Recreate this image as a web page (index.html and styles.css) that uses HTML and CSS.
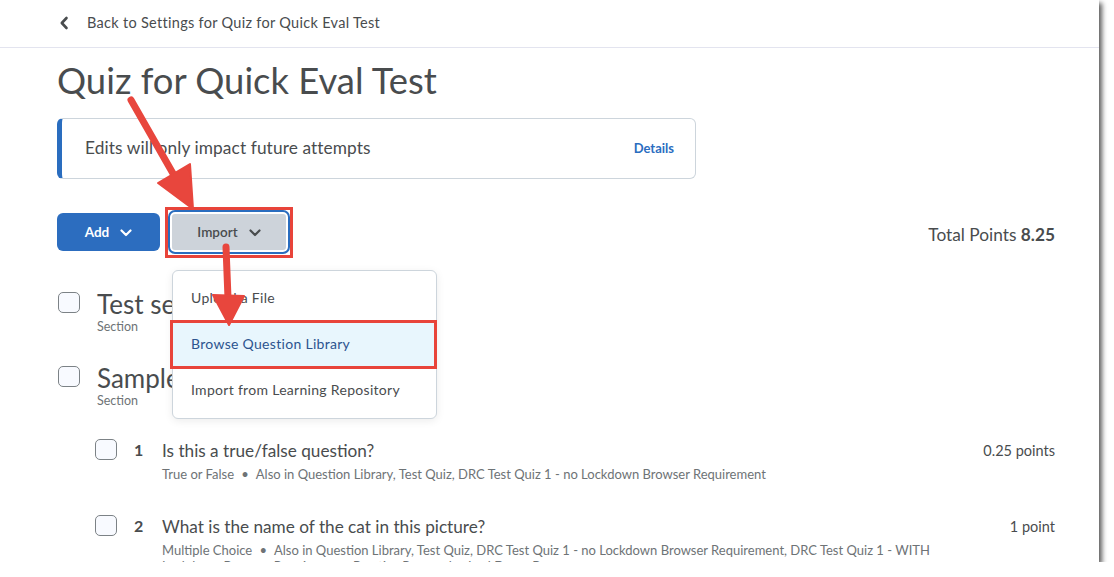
FILE: index.html
```html
<!DOCTYPE html>
<html lang="en">
<head>
<meta charset="utf-8">
<title>Quiz for Quick Eval Test</title>
<link rel="stylesheet" href="styles.css">
</head>
<body>
<div class="frame">
  <nav class="topnav">
    <svg class="back-icon" width="10" height="14" viewBox="0 0 10 14"><path d="M7.5 2 L2.8 7 L7.5 12" fill="none" stroke="#494c4e" stroke-width="2.6" stroke-linecap="round" stroke-linejoin="round"/></svg>
    <span class="back-text">Back to Settings for Quiz for Quick Eval Test</span>
  </nav>
  <main class="main">
    <h1 class="title">Quiz for Quick Eval Test</h1>
    <div class="alert">
      <span class="alert-text">Edits will only impact future attempts</span>
      <span class="alert-link">Details</span>
    </div>
    <div class="toolbar">
      <div class="buttons">
        <button class="btn btn-primary">Add <svg width="12" height="8" viewBox="0 0 12 8"><path d="M1.5 1.5 L6 6 L10.5 1.5" fill="none" stroke="#fff" stroke-width="2.2" stroke-linecap="round" stroke-linejoin="round"/></svg></button>
        <button class="btn btn-secondary">Import <svg width="12" height="8" viewBox="0 0 12 8"><path d="M1.5 1.5 L6 6 L10.5 1.5" fill="none" stroke="#494c4e" stroke-width="2.2" stroke-linecap="round" stroke-linejoin="round"/></svg></button>
      </div>
      <div class="total">Total Points <b>8.25</b></div>
    </div>
    <div class="sections">
      <div class="section-row">
        <span class="checkbox"></span>
        <div class="section-text">
          <div class="section-title">Test section</div>
          <div class="section-sub">Section</div>
        </div>
      </div>
      <div class="section-row second">
        <span class="checkbox"></span>
        <div class="section-text">
          <div class="section-title">Sample section</div>
          <div class="section-sub">Section</div>
        </div>
      </div>
    </div>
    <div class="questions">
      <div class="question">
        <span class="checkbox small"></span>
        <span class="q-num">1</span>
        <div class="q-body">
          <div class="q-head"><span class="q-title">Is this a true/false question?</span><span class="q-points">0.25 points</span></div>
          <div class="q-sub">True or False <span class="dot">•</span> Also in Question Library, Test Quiz, DRC Test Quiz 1 - no Lockdown Browser Requirement</div>
        </div>
      </div>
      <div class="question">
        <span class="checkbox small"></span>
        <span class="q-num">2</span>
        <div class="q-body">
          <div class="q-head"><span class="q-title">What is the name of the cat in this picture?</span><span class="q-points">1 point</span></div>
          <div class="q-sub">Multiple Choice <span class="dot">•</span> Also in Question Library, Test Quiz, DRC Test Quiz 1 - no Lockdown Browser Requirement, DRC Test Quiz 1 - WITH Lockdown Browser Requirement, Practice Respondus LockDown Browser</div>
        </div>
      </div>
    </div>
  </main>

  <div class="menu">
    <div class="menu-item">Upload a File</div>
    <div class="menu-item active">Browse Question Library</div>
    <div class="menu-item">Import from Learning Repository</div>
  </div>

  <div class="hl hl-import"></div>
  <div class="hl hl-browse"></div>

  <svg class="arrows" width="1099" height="562" viewBox="0 0 1099 562">
    <line x1="131" y1="100" x2="175" y2="177" stroke="#e8463d" stroke-width="7" stroke-linecap="round"/>
    <polygon points="193,209 158,183 190,164" fill="#e8463d" stroke="#e8463d" stroke-width="2" stroke-linejoin="round"/>
    <line x1="226" y1="247" x2="228" y2="298" stroke="#e8463d" stroke-width="7" stroke-linecap="round"/>
    <polygon points="229,325 213,295 244,296" fill="#e8463d" stroke="#e8463d" stroke-width="2" stroke-linejoin="round"/>
  </svg>
</div>
</body>
</html>
```
FILE: styles.css
```css
* { box-sizing: border-box; }
html, body { margin: 0; padding: 0; background: #fff; }
body { font-family: Lato, "Open Sans", "Liberation Sans", sans-serif; color: #494c4e; }

.frame {
  position: relative;
  width: 1099px;
  height: 562px;
  background: #fff;
  overflow: hidden;
  box-shadow: 3px 3px 5px rgba(0,0,0,0.65);
}

.topnav {
  height: 48px;
  border-bottom: 1px solid #e3e4ef;
  display: flex;
  align-items: center;
  padding-left: 59px;
  padding-bottom: 2px;
}
.back-icon { display: block; }
.back-text {
  margin-left: 18px;
  font-size: 14.5px;
  letter-spacing: 0.3px;
  color: #494c4e;
}

.main { padding: 0 44px 0 57px; }

.title {
  margin: 12px 0 0 0;
  font-size: 36.4px;
  font-weight: 400;
  line-height: 40px;
  color: #494c4e;
}

.alert {
  margin-top: 18px;
  width: 639px;
  height: 61px;
  border: 1px solid #cdd5dc;
  border-left: 5px solid #2a6dbf;
  border-radius: 6px;
  display: flex;
  align-items: center;
  justify-content: space-between;
  padding: 0 21px 3px 23px;
}
.alert-text { font-size: 17.3px; color: #494c4e; letter-spacing: 0.1px; }
.alert-link { font-size: 13px; font-weight: 700; color: #2a6dbf; margin-top: 2px; }

.toolbar {
  margin-top: 30px;
  height: 46px;
  display: flex;
  align-items: center;
  justify-content: space-between;
}
.buttons { display: flex; align-items: center; }
.btn {
  font-family: inherit;
  font-size: 13.5px;
  font-weight: 700;
  border-radius: 6px;
  display: flex;
  align-items: center;
  justify-content: center;
  gap: 11px;
  cursor: pointer;
}
.btn svg { display: block; margin-top: 2px; }
.btn-primary {
  width: 103px;
  height: 38px;
  background: #2c6dbf;
  color: #fff;
  border: none;
  padding: 0;
}
.btn-secondary {
  margin-left: 8px;
  width: 122px;
  height: 44px;
  background: #cdd3da;
  color: #494c4e;
  border: 2px solid #2a6dbf;
  box-shadow: inset 0 0 0 2px #fff;
  border-radius: 7px;
  font-weight: 600;
  padding: 0;
}
.total { font-size: 17.3px; color: #494c4e; margin-top: 5px; }
.total b { font-weight: 700; }

.sections { margin-top: 34px; }
.section-row { display: flex; align-items: flex-start; }
.section-row.second { margin-top: 28px; }
.checkbox {
  flex: none;
  width: 22px;
  height: 21px;
  border: 1px solid #7c8286;
  border-radius: 5px;
  background: #f8faff;
  margin-top: 2px;
}
.section-row .checkbox { margin-left: 1px; margin-top: 3px; }
.section-text { margin-left: 17px; }
.section-title { font-size: 26px; line-height: 30px; color: #494c4e; white-space: nowrap; }
.section-sub { font-size: 12.5px; line-height: 16px; color: #6e7376; }

.questions { margin-top: 29px; padding-left: 38px; }
.question { display: flex; align-items: flex-start; }
.question + .question { margin-top: 32px; }
.checkbox.small { margin-top: 1px; }
.q-num {
  flex: none;
  width: 45px;
  padding-left: 17px;
  font-size: 16px;
  font-weight: 700;
  line-height: 24px;
  color: #494c4e;
}
.q-body { flex: 1; }
.q-head { display: flex; justify-content: space-between; align-items: center; height: 24px; }
.q-title { font-size: 17.2px; color: #494c4e; }
.q-points { font-size: 14.5px; color: #494c4e; }
.q-sub { margin-top: 4px; max-width: 790px; font-size: 13px; line-height: 16px; color: #6e7376; }
.dot { margin: 0 4px; }

.menu {
  position: absolute;
  left: 172px;
  top: 270px;
  width: 265px;
  height: 149px;
  background: #fff;
  border: 1px solid #cdd5dc;
  border-radius: 6px;
  box-shadow: 0 2px 8px rgba(0,0,0,0.08);
  padding-top: 3px;
}
.menu-item {
  height: 46px;
  display: flex;
  align-items: center;
  padding-left: 18px;
  font-size: 14px;
  letter-spacing: 0.3px;
  color: #494c4e;
}
.menu-item.active { background: #e8f6fd; color: #2c548f; }

.hl {
  position: absolute;
  border: 3px solid #e8443a;
  pointer-events: none;
}
.hl-import { left: 165px; top: 207px; width: 128px; height: 51px; }
.hl-browse { left: 170px; top: 320px; width: 267px; height: 49px; }

.arrows { position: absolute; left: 0; top: 0; pointer-events: none; }
```
